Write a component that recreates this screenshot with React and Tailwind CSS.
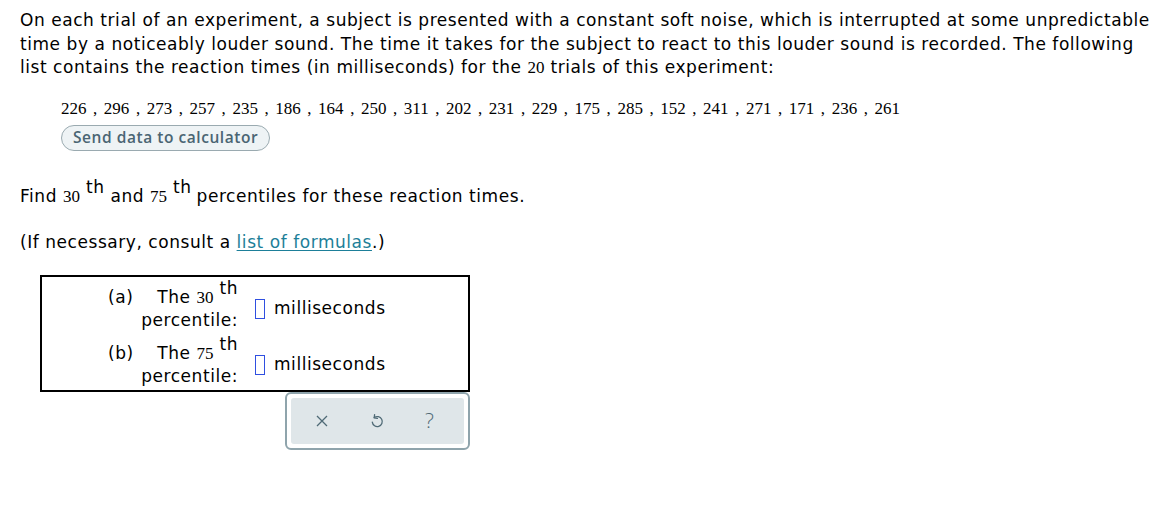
import React from 'react';

const data = [226, 296, 273, 257, 235, 186, 164, 250, 311, 202, 231, 229, 175, 285, 152, 241, 271, 171, 236, 261];

const Ordinal = ({ n }) => (
  <span className="whitespace-nowrap">
    <span className="font-['Liberation_Serif',serif] text-[17px] tracking-normal">{n}</span>
    <span className="ml-[6px] relative -top-[9px]">th</span>
  </span>
);

const Part = ({ label, n }) => (
  <div className="flex items-center">
    <div className="w-[196px] grid grid-cols-[auto_1fr] leading-[22px]">
      <div className="pl-[66px]">({label})</div>
      <div className="text-right">The <Ordinal n={n} /></div>
      <div />
      <div className="text-right">percentile:</div>
    </div>
    <span className="ml-[17px] mt-[2px] w-[10px] h-[20px] border border-[#2f4fe0]" />
    <span className="ml-[9px] mt-[2px]">milliseconds</span>
  </div>
);

const App = () => {
  return (
    <div className="w-[1156px] h-[518px] bg-white text-black font-['DejaVu_Sans',sans-serif] text-[17px] tracking-[0.55px]">
      <div className="pl-[20px] pt-[9px]">
        <p className="leading-[23.5px] whitespace-nowrap">
          On each trial of an experiment, a subject is presented with a constant soft noise, which is interrupted at some unpredictable
          <br />
          time by a noticeably louder sound. The time it takes for the subject to react to this louder sound is recorded. The following
          <br />
          list contains the reaction times (in milliseconds) for the <span className="font-['Liberation_Serif',serif] text-[17px] tracking-normal">20</span> trials of this experiment:
        </p>

        <div className="ml-[41px] mt-[19px] font-['Liberation_Serif',serif] text-[17px] tracking-normal [word-spacing:2.3px] leading-[20px]">
          {data.join(' , ')}
        </div>

        <button className="ml-[41px] mt-[6px] h-[26px] px-[11px] rounded-full border border-[#9aaab0] bg-[#eef3f5] text-[#4a6573] text-[15.5px] tracking-[0.55px] leading-none font-['Open_Sans',sans-serif] font-semibold">
          Send data to calculator
        </button>

        <p className="mt-[33px] leading-[24px]">
          Find <Ordinal n={30} /> and <Ordinal n={75} /> <span className="-ml-[1px]">percentiles for these reaction times.</span>
        </p>

        <p className="mt-[21px] leading-[24px]">
          (If necessary, consult a <a href="#" className="text-[#1d7f99] underline underline-offset-2">list of formulas</a>.)
        </p>

        <div className="ml-[20px] mt-[21px] w-[430px]">
          <div className="border-2 border-black pt-[9px] pb-[3px] flex flex-col gap-[11px]">
            <Part label="a" n={30} />
            <Part label="b" n={75} />
          </div>
          <div className="flex justify-end">
            <div className="w-[185px] h-[58px] border-2 border-[#8fa4ac] rounded-[6px] bg-white p-[4px]">
              <div className="h-full bg-[#dfe6e9] rounded-[3px] flex items-center pl-[25px] text-[#4f6a76]">
                <svg width="12" height="12" viewBox="0 0 12 12" fill="none" stroke="currentColor" strokeWidth="1.3">
                  <path d="M1 1 L11 11 M11 1 L1 11" />
                </svg>
                <svg className="ml-[42px]" width="14" height="16" viewBox="0 0 14 16" fill="none" stroke="currentColor" strokeWidth="1.3" strokeLinecap="round" strokeLinejoin="round">
                  <path d="M4.2 4.6 A5 5 0 1 1 2.3 9.2" />
                  <path d="M4.6 1.6 L4.2 4.8 L7.4 5.3" />
                </svg>
                <span className="ml-[41px] text-[21px] font-['Open_Sans',sans-serif] font-light leading-none tracking-normal">?</span>
              </div>
            </div>
          </div>
        </div>
      </div>
    </div>
  );
};

export default App;
